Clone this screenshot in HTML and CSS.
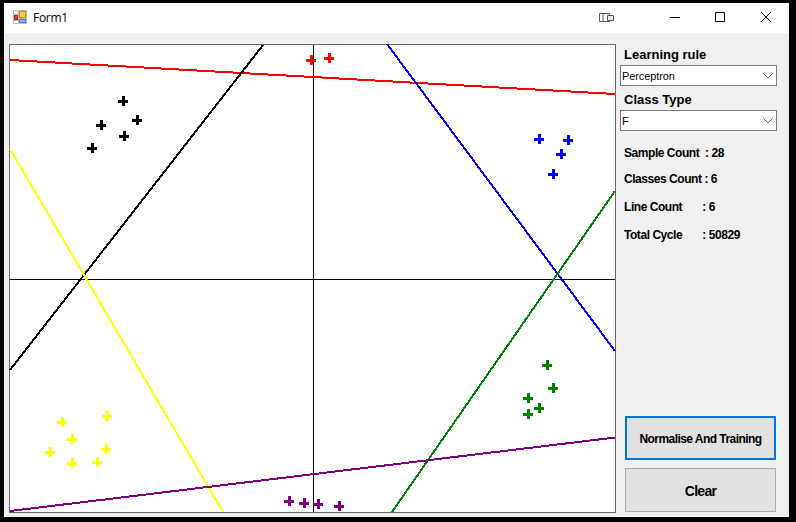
FILE: index.html
```html
<!DOCTYPE html>
<html lang="en">
<head>
<meta charset="utf-8">
<title>Form1</title>
<link rel="stylesheet" href="styles.css">
</head>
<body>
<div class="window">
  <header class="titlebar">
    <svg class="app-icon" width="16" height="16" viewBox="0 0 16 16">
      <rect x="1" y="1" width="14" height="14" fill="#bdbdbd"/>
      <rect x="2" y="2" width="4" height="3" fill="#fff"/>
      <rect x="2" y="12" width="4" height="2" fill="#fff"/>
      <rect x="2" y="6" width="4" height="5" fill="#b01c18"/>
      <rect x="3" y="7" width="2" height="3" fill="#e8403a"/>
      <rect x="7" y="2" width="7" height="7" fill="#c98a1a"/>
      <rect x="8" y="3" width="5" height="5" fill="#f9cf4a"/>
      <rect x="7" y="10" width="7" height="4" fill="#3f7fd0"/>
      <rect x="8" y="11" width="5" height="2" fill="#8db8ee"/>
    </svg>
    <span class="title">Form1</span>
    <svg class="snap" width="16" height="10" viewBox="0 0 16 10">
      <path d="M.5 .5H10.5V8.5H.5Z" fill="#fff" stroke="#555"/>
      <path d="M3.5 1V8M4.5 1V8" stroke="#aaa"/>
      <path d="M8.5 2.5H14.5V7.5H8.5Z" fill="#e8e8e8" stroke="#555"/>
    </svg>
    <div class="controls">
      <svg class="ctl" width="46" height="30" viewBox="0 0 46 30"><path d="M19 15.5H29" stroke="#000"/></svg>
      <svg class="ctl" width="46" height="30" viewBox="0 0 46 30"><path d="M18.5 10.5H27.5V19.5H18.5Z" fill="none" stroke="#000"/></svg>
      <svg class="ctl" width="46" height="30" viewBox="0 0 46 30"><path d="M18 10L28 20M28 10L18 20" stroke="#000" fill="none"/></svg>
    </div>
  </header>
  <main class="client">
    <svg class="plot" width="607" height="470" viewBox="9 44 607 470">
      <rect x="9.5" y="44.5" width="606" height="468" fill="#fff" stroke="#696969"/>
      <g class="axes">
        <path d="M313.5 45V512M10 279.5H615"/>
      </g>
      <g class="lines">
        <path stroke="#ff0000" d="M10 60L615 94"/>
        <path stroke="#000000" d="M10 370L263 45"/>
        <path stroke="#0000ff" d="M387 44L615 351"/>
        <path stroke="#008000" d="M392 512L615 191"/>
        <path stroke="#ffff00" d="M10 149L223 512"/>
        <path stroke="#800080" d="M10 511L615 437.5"/>
      </g>
      <g class="marks">
        <path stroke="#000000" d="M118 101h10M123 96v10M96 125h10M101 120v10M132 120h10M137 115v10M119 136h10M124 131v10M87 148h10M92 143v10"/>
        <path stroke="#ff0000" d="M306 60h10M311 55v10M324 58h10M329 53v10"/>
        <path stroke="#0000ff" d="M534 139h10M539 134v10M563 140h10M568 135v10M556 154h10M561 149v10M548 174h10M553 169v10"/>
        <path stroke="#008000" d="M542 365h10M547 360v10M548 388h10M553 383v10M523 398h10M528 393v10M534 408h10M539 403v10M523 414h10M528 409v10"/>
        <path stroke="#ffff00" d="M57 422h10M62 417v10M102 416h10M107 411v10M67 439h10M72 434v10M101 449h10M106 444v10M45 452h10M50 447v10M67 463h10M72 458v10M92 462h10M97 457v10"/>
        <path stroke="#800080" d="M284 501h10M289 496v10M299 503h10M304 498v10M313 504h10M318 499v10M334 506h10M339 501v10"/>
      </g>
    </svg>
    <aside class="side">
      <div class="heading">Learning rule</div>
      <div class="combo"><span>Perceptron</span><svg width="10" height="6" viewBox="0 0 10 6"><path d="M.5 .5L5 5L9.5 .5" fill="none" stroke="#555"/></svg></div>
      <div class="heading second">Class Type</div>
      <div class="combo"><span>F</span><svg width="10" height="6" viewBox="0 0 10 6"><path d="M.5 .5L5 5L9.5 .5" fill="none" stroke="#555"/></svg></div>
      <div class="stats">
        <div class="stat">Sample Count  : 28</div>
        <div class="stat">Classes Count : 6</div>
        <div class="stat">Line Count       : 6</div>
        <div class="stat">Total Cycle       : 50829</div>
      </div>
      <div class="buttons">
        <button class="btn focus">Normalise And Training</button>
        <button class="btn big">Clear</button>
      </div>
    </aside>
  </main>
</div>
</body>
</html>
```
FILE: styles.css
```css
html, body { margin: 0; padding: 0; }
body {
  width: 796px;
  height: 522px;
  background: #000;
  padding: 3px 7px 5px 4px;
  box-sizing: border-box;
  overflow: hidden;
  font-family: "Liberation Sans", Arial, sans-serif;
}
.window {
  width: 785px;
  height: 514px;
  background: #f0f0f0;
  display: flex;
  flex-direction: column;
}
.titlebar {
  height: 30px;
  flex: none;
  background: #fff;
  display: flex;
  align-items: center;
  padding-left: 8px;
}
.app-icon { flex: none; margin-top: -3px; }
.title {
  font-family: "Open Sans", sans-serif;
  font-size: 12px;
  letter-spacing: -0.3px;
  margin-left: 5px;
  margin-top: -1px;
  color: #000;
}
.snap { margin-left: auto; margin-right: 36px; flex: none; }
.controls { display: flex; margin-top: -2px; }
.ctl { display: block; }
.client {
  flex: 1;
  display: flex;
  padding: 11px 0 0 5px;
}
.plot { display: block; flex: none; }
.axes path { stroke: #000; stroke-width: 1; fill: none; shape-rendering: crispEdges; }
.lines path { stroke-width: 2; fill: none; shape-rendering: crispEdges; }
.marks path { stroke-width: 3; fill: none; shape-rendering: crispEdges; }
.side {
  width: 157px;
  margin-left: 4px;
  display: flex;
  flex-direction: column;
  height: 470px;
}
.heading {
  font-weight: bold;
  font-size: 13px;
  line-height: 14px;
  margin: 4px 0 0 4px;
  color: #000;
}
.heading.second { margin-top: 7px; }
.combo {
  height: 21px;
  box-sizing: border-box;
  width: 157px;
  margin-top: 3px;
  border: 1px solid #7a7a7a;
  background: #fff;
  font-size: 11px;
  letter-spacing: -0.1px;
  display: flex;
  align-items: center;
  justify-content: space-between;
  padding: 0 3px 0 1px;
  color: #000;
}
.stats { margin: 15px 0 0 4px; display: flex; flex-direction: column; gap: 14px; }
.stat {
  font-size: 12px;
  font-weight: bold;
  letter-spacing: -0.45px;
  line-height: 14px;
  white-space: pre;
  color: #000;
}
.stat:first-child { margin-bottom: -2px; }
.buttons {
  margin-top: auto;
  margin-left: 5px;
  display: flex;
  flex-direction: column;
  gap: 8px;
  padding-bottom: 2px;
}
.btn {
  width: 151px;
  height: 44px;
  box-sizing: border-box;
  background: #e1e1e1;
  border: 1px solid #adadad;
  font-family: "Liberation Sans", Arial, sans-serif;
  font-weight: bold;
  font-size: 12px;
  letter-spacing: -0.55px;
  color: #000;
  padding: 2px 0 0;
}
.btn.focus { border: 2px solid #0078d7; }
.btn.big { font-size: 14px; letter-spacing: -0.7px; }
```
